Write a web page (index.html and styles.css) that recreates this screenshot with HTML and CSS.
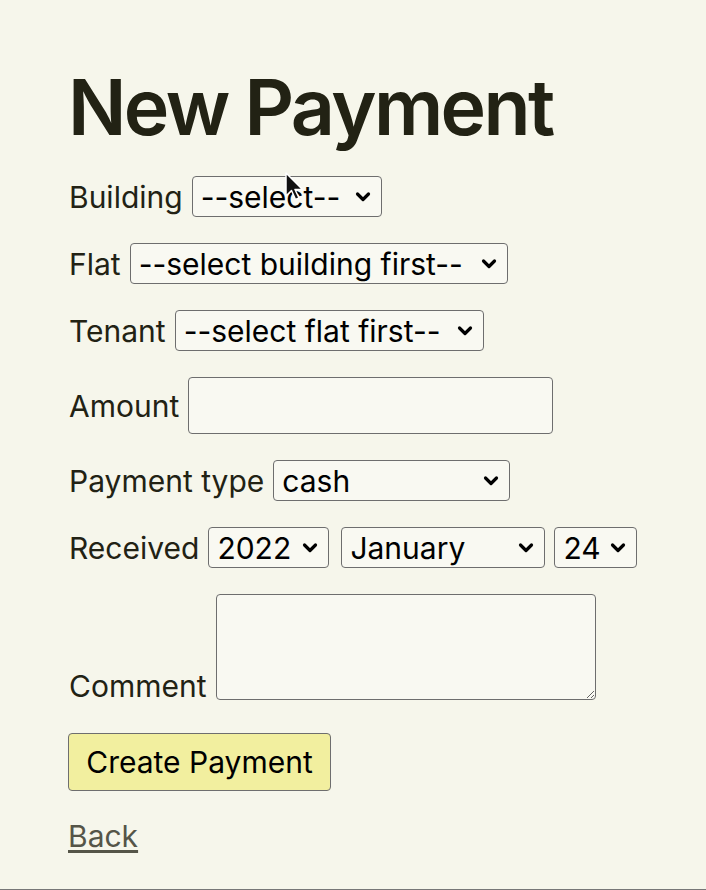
FILE: index.html
```html
<!DOCTYPE html>
<html lang="en">
<head>
<meta charset="utf-8">
<title>New Payment</title>
<link rel="stylesheet" href="styles.css">
</head>
<body>
<main class="page">
  <h1 class="title">New Payment</h1>
  <form class="form">
    <div class="row">
      <label class="label" for="building">Building</label>
      <select id="building" class="control sel w-building"><option>--select--</option></select>
    </div>
    <div class="row">
      <label class="label" for="flat">Flat</label>
      <select id="flat" class="control sel w-flat"><option>--select building first--</option></select>
    </div>
    <div class="row">
      <label class="label" for="tenant">Tenant</label>
      <select id="tenant" class="control sel w-tenant"><option>--select flat first--</option></select>
    </div>
    <div class="row">
      <label class="label" for="amount">Amount</label>
      <input id="amount" class="control input" type="text">
    </div>
    <div class="row">
      <label class="label" for="ptype">Payment type</label>
      <select id="ptype" class="control sel w-type"><option>cash</option></select>
    </div>
    <div class="row">
      <label class="label" for="year">Received</label>
      <select id="year" class="control sel w-year"><option>2022</option></select>
      <select class="control sel w-month"><option>January</option></select>
      <select class="control sel w-day"><option>24</option></select>
    </div>
    <div class="row row-end">
      <label class="label label-end" for="comment">Comment</label>
      <textarea id="comment" class="control area"></textarea>
    </div>
    <div class="row">
      <button type="button" class="btn">Create Payment</button>
    </div>
  </form>
  <a class="back" href="#">Back</a>
  <svg class="cursor" width="20" height="30" viewBox="0 0 20 30" aria-hidden="true">
    <path d="M1 1 L1 24 L6.5 18.5 L10.5 27.5 L14 26 L10 17.5 L17.5 17.5 Z" fill="#111" stroke="#fff" stroke-width="1.5" stroke-linejoin="round"/>
  </svg>
</main>
</body>
</html>
```

FILE: styles.css
```css
html, body {
  margin: 0;
  padding: 0;
  background: #f6f6eb;
}
body {
  font-family: Inter, "Noto Sans", "Liberation Sans", sans-serif;
  color: #222214;
}
.page {
  position: relative;
  box-sizing: border-box;
  height: 890px;
  padding: 60px 0 0 68px;
  border-bottom: 1px solid #777;
}
.title {
  margin: 0 0 22px 0;
  font-size: 77px;
  line-height: 94px;
  font-weight: 600;
  letter-spacing: -2.6px;
}
.form {
  display: flex;
  flex-direction: column;
  gap: 26px;
}
.row {
  display: flex;
  align-items: center;
  gap: 9px;
}
.row-end {
  align-items: flex-end;
}
.label {
  font-size: 30px;
  line-height: 36px;
  margin-left: 1px;
}
.label-end {
  margin-bottom: -4px;
}
.control {
  box-sizing: border-box;
  font-family: Inter, "Noto Sans", "Liberation Sans", sans-serif;
  font-size: 30px;
  color: #000;
  border: 1.5px solid #6e6e6e;
  border-radius: 4px;
  background-color: #f9f9f2;
  margin: 0;
}
.sel {
  appearance: none;
  -webkit-appearance: none;
  height: 41px;
  padding: 0 30px 0 8px;
  line-height: 36px;
  background-image: url("data:image/svg+xml,%3Csvg xmlns='http://www.w3.org/2000/svg' width='16' height='12' viewBox='0 0 16 12'%3E%3Cpath d='M2.5 3 L8 8.5 L13.5 3' fill='none' stroke='%23000' stroke-width='3.2' stroke-linecap='round' stroke-linejoin='round'/%3E%3C/svg%3E");
  background-repeat: no-repeat;
  background-position: right 10px center;
  background-size: 16px 12px;
}
.w-building { width: 190px; }
.w-flat { width: 378px; }
.w-tenant { width: 309px; }
.w-type { width: 237px; }
.w-year { width: 121px; }
.w-month { width: 204px; margin-left: 3px; }
.w-day { width: 83px; }
.input {
  width: 365px;
  height: 57px;
  padding: 0 8px;
}
.area {
  width: 380px;
  height: 106px;
  resize: both;
  padding: 4px 8px;
}
.btn {
  box-sizing: border-box;
  height: 58px;
  width: 263px;
  font-family: Inter, "Noto Sans", "Liberation Sans", sans-serif;
  font-size: 30px;
  color: #000;
  background: #f2ef9f;
  border: 1.5px solid #6e6e6e;
  border-radius: 4px;
  padding: 0 14px;
  margin-top: 7px;
}
.back {
  display: inline-block;
  margin-top: 27px;
  font-size: 30px;
  line-height: 36px;
  color: #555548;
  text-decoration: underline;
  text-underline-offset: 3px;
}
.cursor {
  position: absolute;
  left: 285px;
  top: 172px;
}
```
